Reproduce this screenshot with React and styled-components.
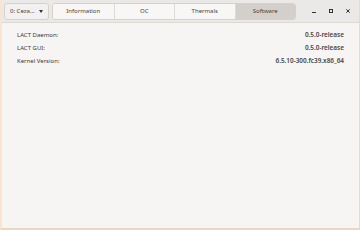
import React from "react";
import styled, { createGlobalStyle } from "styled-components";

const Global = createGlobalStyle`
  html, body { margin: 0; padding: 0; background: #f6f5f3; }
  body { width: 360px; height: 230px; overflow: hidden; font-family: "Noto Sans", "Open Sans", sans-serif; }
  * { box-sizing: border-box; }
`;

const Window = styled.div`
  width: 360px;
  height: 230px;
  display: flex;
  flex-direction: column;
  background: #f6f5f3;
  border-left: 2px solid #f9e4cf;
  border-right: 1px solid #ead9c6;
  border-bottom: 2px solid #ead7c2;
`;

const HeaderBar = styled.div`
  height: 23px;
  display: flex;
  align-items: center;
  padding: 0 2px 0 2px;
  gap: 3px;
  background: #ebe9e7;
  border-bottom: 1px solid #dcd8d4;
`;

const Dropdown = styled.div`
  width: 45px;
  height: 17px;
  display: flex;
  align-items: center;
  justify-content: space-between;
  padding: 0 5px 0 5px;
  background: #f3f1ef;
  border: 1px solid #d6d1cc;
  border-radius: 3px;
  font-size: 6px;
  color: #3a3a3a;
`;

const Caret = styled.span`
  width: 0;
  height: 0;
  border-left: 2.5px solid transparent;
  border-right: 2.5px solid transparent;
  border-top: 3px solid #333;
`;

const TabGroup = styled.div`
  display: flex;
  height: 17px;
  border: 1px solid #d6d1cc;
  border-radius: 3px;
  overflow: hidden;
`;

const Tab = styled.div`
  width: 60.5px;
  display: flex;
  align-items: center;
  justify-content: center;
  font-size: 6px;
  color: #444;
  background: ${p => (p.$active ? "#d3d0cc" : "#f8f7f6")};
  & + & { border-left: 1px solid #dedad6; }
`;

const Spacer = styled.div`
  flex: 1;
`;

const Controls = styled.div`
  display: flex;
  align-items: center;
  gap: 9px;
  padding-right: 5px;
`;

const Ctrl = styled.div`
  width: 8px;
  height: 8px;
  display: flex;
  align-items: center;
  justify-content: center;
`;

const Content = styled.div`
  flex: 1;
  padding: 5px 15px 0 15px;
  display: flex;
  flex-direction: column;
`;

const Row = styled.div`
  height: 13px;
  display: flex;
  align-items: center;
  justify-content: space-between;
  font-size: 6px;
  color: #383838;
`;

const Value = styled.span`
  font-size: 6.4px;
  font-weight: 600;
  color: #484848;
`;

const rows = [
  ["LACT Daemon:", "0.5.0-release"],
  ["LACT GUI:", "0.5.0-release"],
  ["Kernel Version:", "6.5.10-300.fc39.x86_64"],
];

export default function App() {
  return (
    <>
      <Global />
      <Window>
        <HeaderBar>
          <Dropdown>
            <span>0: Ceza...</span>
            <Caret />
          </Dropdown>
          <TabGroup>
            <Tab>Information</Tab>
            <Tab>OC</Tab>
            <Tab>Thermals</Tab>
            <Tab $active>Software</Tab>
          </TabGroup>
          <Spacer />
          <Controls>
            <Ctrl>
              <svg width="8" height="8" viewBox="0 0 8 8"><rect x="2" y="5" width="4" height="1" fill="#333" /></svg>
            </Ctrl>
            <Ctrl>
              <svg width="8" height="8" viewBox="0 0 8 8"><rect x="2.5" y="2.5" width="3" height="3" fill="none" stroke="#333" strokeWidth="1" /></svg>
            </Ctrl>
            <Ctrl>
              <svg width="8" height="8" viewBox="0 0 8 8"><path d="M2.3 2.3 L5.7 5.7 M5.7 2.3 L2.3 5.7" stroke="#333" strokeWidth="1" /></svg>
            </Ctrl>
          </Controls>
        </HeaderBar>
        <Content>
          {rows.map(([k, v]) => (
            <Row key={k}>
              <span>{k}</span>
              <Value>{v}</Value>
            </Row>
          ))}
        </Content>
      </Window>
    </>
  );
}
